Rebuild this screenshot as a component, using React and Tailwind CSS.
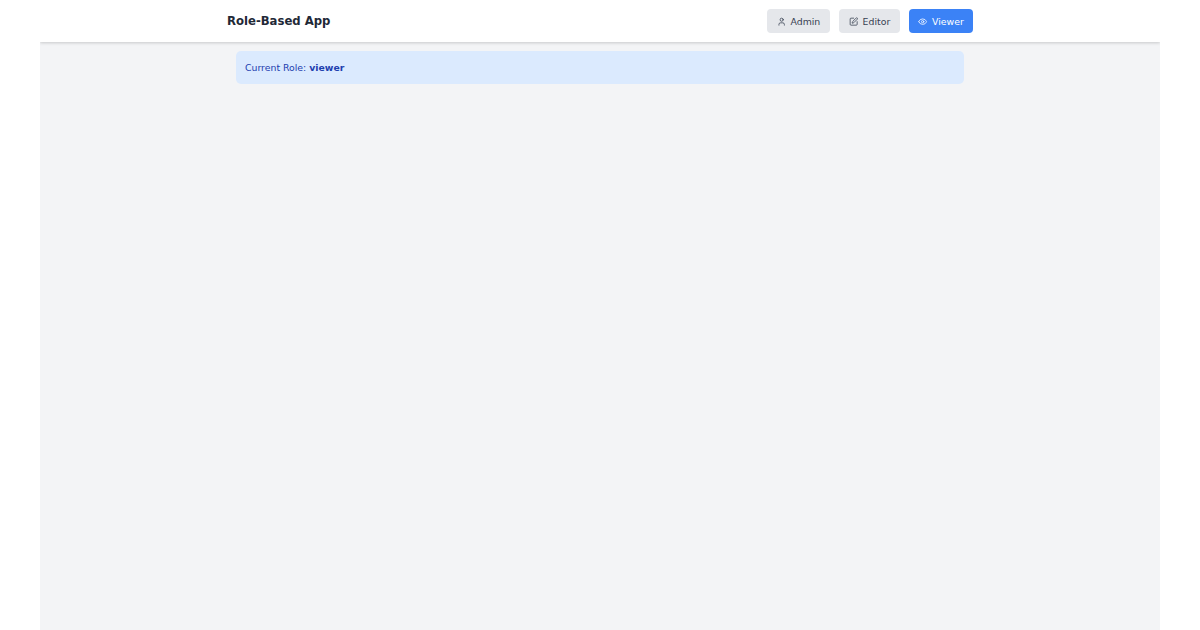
import { User, SquarePen, Eye } from "lucide-react";

const roles = [
  { name: "Admin", icon: User, width: "w-[63px]" },
  { name: "Editor", icon: SquarePen, width: "w-[61px]" },
  { name: "Viewer", icon: Eye, width: "w-[64px]", active: true },
];

export default function App() {
  return (
    <div className="min-h-[630px] bg-white font-['DejaVu_Sans',sans-serif]">
      <div className="mx-[40px] min-h-[630px] overflow-hidden bg-[#f3f4f6]">
        <nav className="h-[42px] bg-white shadow-[0_1px_3px_0_rgba(0,0,0,0.18)]">
          <div className="mx-auto flex h-[42px] w-[746px] items-center justify-between">
            <h1 className="text-[11.67px] leading-[18px] font-bold text-[#1f2937]">Role-Based App</h1>
            <div className="flex gap-[9px]">
              {roles.map((role) => {
                const Icon = role.icon;
                return (
                  <button
                    key={role.name}
                    className={
                      role.active
                        ? `flex h-[24px] ${role.width} items-center justify-center gap-[4.5px] rounded-[4px] bg-[#3b82f6] pt-px text-[9.33px] leading-[14px] text-white`
                        : `flex h-[24px] ${role.width} items-center justify-center gap-[4.5px] rounded-[4px] bg-[#e5e7eb] pt-px text-[9.33px] leading-[14px] text-[#374151]`
                    }
                  >
                    <Icon size={9.33} strokeWidth={2} />
                    {role.name}
                  </button>
                );
              })}
            </div>
          </div>
        </nav>
        <main className="mx-auto w-[728px] pt-[9px]">
          <div className="h-[33px] rounded-[5px] bg-[#dbeafe] px-[9px] pt-px text-[9.33px] leading-[32px] text-[#1e40af]">
            Current Role: <span className="font-bold">viewer</span>
          </div>
        </main>
      </div>
    </div>
  );
}
